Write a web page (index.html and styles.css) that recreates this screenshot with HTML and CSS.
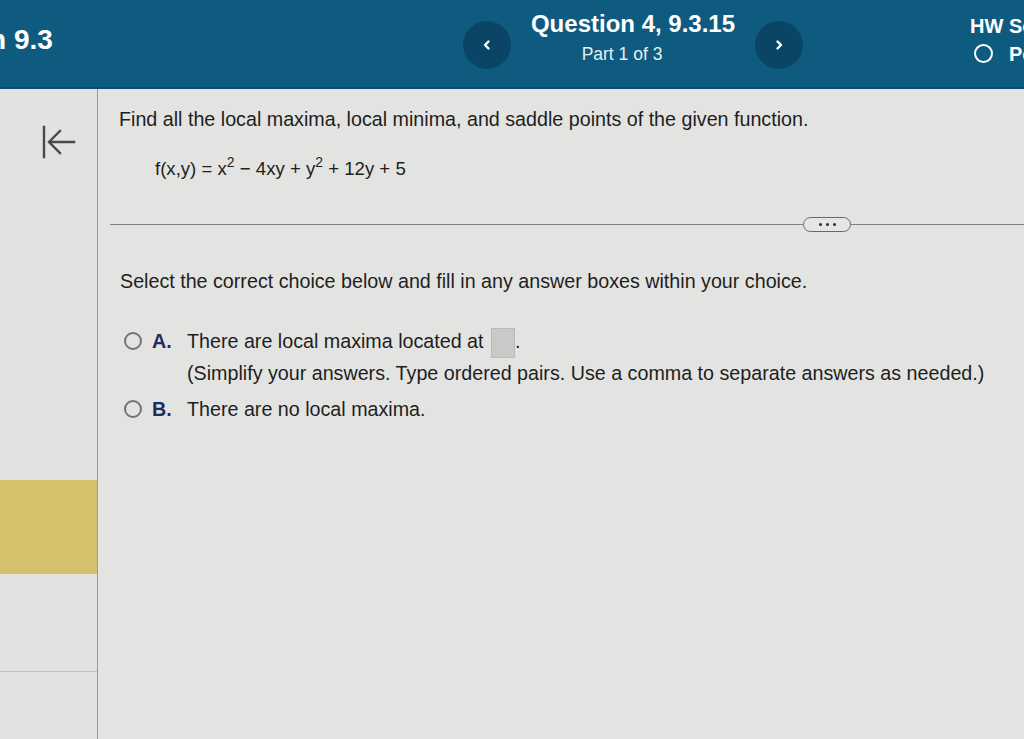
FILE: index.html
```html
<!DOCTYPE html>
<html lang="en">
<head>
<meta charset="utf-8">
<title>Question 4, 9.3.15</title>
<link rel="stylesheet" href="styles.css">
</head>
<body>
<header class="topbar">
  <div class="section-title">Section 9.3</div>
  <div class="qnav">
    <button class="navbtn" aria-label="Previous question">
      <svg width="12" height="12" viewBox="0 0 12 12"><path d="M7.5 2.5 L4 6 L7.5 9.5" fill="none" stroke="#fff" stroke-width="2.4" stroke-linecap="round" stroke-linejoin="round"/></svg>
    </button>
    <div class="qtitle">
      <div class="qname">Question 4, 9.3.15</div>
      <div class="qpart">Part 1 of 3</div>
    </div>
    <button class="navbtn" aria-label="Next question">
      <svg width="12" height="12" viewBox="0 0 12 12"><path d="M4.5 2.5 L8 6 L4.5 9.5" fill="none" stroke="#fff" stroke-width="2.4" stroke-linecap="round" stroke-linejoin="round"/></svg>
    </button>
  </div>
  <div class="score">
    <div class="score-line">HW Score: 45%</div>
    <div class="points-line"><span class="ring"></span>Points: 0 of 1</div>
  </div>
</header>
<div class="page">
  <aside class="sidebar">
    <div class="collapse">
      <svg width="36" height="34" viewBox="0 0 36 34"><path d="M3 2 V32 M33 17 H9 M19 6 L8 17 L19 28" fill="none" stroke="#4a4a4a" stroke-width="2.4" stroke-linecap="square"/></svg>
    </div>
    <div class="side-item active"></div>
    <div class="side-item"></div>
  </aside>
  <main class="content">
    <div class="question">
      <p class="prompt">Find all the local maxima, local minima, and saddle points of the given function.</p>
      <p class="formula">f(x,y) = x<sup>2</sup> − 4xy + y<sup>2</sup> + 12y + 5</p>
    </div>
    <div class="divider">
      <span class="rule"></span>
      <span class="more"><i></i><i></i><i></i></span>
      <span class="rule"></span>
    </div>
    <div class="answer">
      <p class="instr">Select the correct choice below and fill in any answer boxes within your choice.</p>
      <div class="choice">
        <span class="radio"></span>
        <span class="letter">A.</span>
        <div class="choice-text">
          <div>There are local maxima located at <span class="box"></span>.</div>
          <div class="hint">(Simplify your answers. Type ordered pairs. Use a comma to separate answers as needed.)</div>
        </div>
      </div>
      <div class="choice">
        <span class="radio"></span>
        <span class="letter">B.</span>
        <div class="choice-text">There are no local maxima.</div>
      </div>
    </div>
  </main>
</div>
</body>
</html>
```
FILE: styles.css
```css
html, body {
  margin: 0;
  padding: 0;
}
body {
  width: 1024px;
  height: 739px;
  overflow: hidden;
  background: #e3e4e2;
  font-family: "Liberation Sans", Arial, sans-serif;
  color: #1e1e1e;
}
.topbar {
  height: 89px;
  background: #0f5b80;
  display: grid;
  grid-template-columns: 463px auto 1fr;
  align-items: center;
  color: #fff;
  box-shadow: inset 0 -2px 0 #0b4d6c;
}
.section-title {
  font-weight: bold;
  font-size: 28px;
  margin-left: -95px;
  margin-top: -10px;
  white-space: nowrap;
}
.qnav {
  display: flex;
  align-items: center;
  gap: 18px;
}
.navbtn {
  width: 48px;
  height: 48px;
  border-radius: 50%;
  border: none;
  background: #0b4565;
  display: flex;
  align-items: center;
  justify-content: center;
  padding: 0;
}
.qtitle {
  width: 208px;
  text-align: center;
  margin-top: -14px;
}
.qname {
  font-weight: bold;
  font-size: 24px;
  line-height: 28px;
}
.qpart {
  font-size: 17.5px;
  line-height: 22px;
  margin-top: 5px;
  padding-right: 22px;
  color: #e6eef3;
}
.score {
  margin-left: 167px;
  white-space: nowrap;
  margin-top: -8px;
}
.score-line {
  font-weight: bold;
  font-size: 20px;
  line-height: 26px;
}
.points-line {
  font-weight: bold;
  font-size: 20px;
  line-height: 30px;
  display: flex;
  align-items: center;
  gap: 16px;
  padding-left: 4px;
}
.ring {
  width: 15px;
  height: 15px;
  border: 2.5px solid #fff;
  border-radius: 50%;
  display: inline-block;
}
.page {
  display: flex;
  height: 650px;
}
.sidebar {
  width: 97px;
  flex: none;
  border-right: 1.5px solid #9a9a9a;
  background: #e2e3e1;
  display: flex;
  flex-direction: column;
}
.collapse {
  height: 391px;
  padding: 36px 0 0 41px;
  box-sizing: border-box;
}
.side-item {
  height: 97px;
  border-bottom: 1px solid #bdbdbb;
}
.side-item.active {
  height: 94px;
  background: #d5c06c;
  border-bottom: none;
}
.content {
  flex: 1;
  padding: 17px 0 0 12px;
}
.question {
  padding-left: 9px;
}
.prompt {
  margin: 0;
  font-size: 19.7px;
  line-height: 26px;
}
.formula {
  margin: 25px 0 0 36px;
  font-size: 18.6px;
  line-height: 24px;
}
.formula sup {
  font-size: 14px;
  line-height: 0;
  vertical-align: 0.55em;
}
.divider {
  display: flex;
  align-items: center;
  margin-top: 36px;
}
.rule {
  height: 1px;
  background: #7e7f7e;
  flex: 1;
}
.rule:first-child {
  flex: none;
  width: 693px;
}
.more {
  width: 46px;
  height: 13px;
  border: 1.5px solid #6a6a6a;
  border-radius: 8px;
  display: flex;
  align-items: center;
  justify-content: center;
  gap: 4px;
  background: #e6e7e5;
}
.more i {
  width: 3px;
  height: 3px;
  border-radius: 50%;
  background: #2a2a3a;
}
.answer {
  padding-left: 10px;
}
.instr {
  margin: 36px 0 0 0;
  font-size: 19.7px;
  line-height: 26px;
}
.choice {
  display: flex;
  align-items: flex-start;
  font-size: 19.7px;
  line-height: 30px;
}
.choice:nth-of-type(1) {
  margin-top: 32px;
}
.choice + .choice {
  margin-top: 6px;
}
.radio {
  width: 14px;
  height: 14px;
  border: 2px solid #6e7380;
  border-radius: 50%;
  flex: none;
  margin: 6px 0 0 4px;
}
.letter {
  font-weight: bold;
  color: #1f2c5c;
  width: 35px;
  margin-left: 10px;
  flex: none;
}
.box {
  display: inline-block;
  width: 22px;
  height: 28px;
  background: #c9cac8;
  border: 1px solid #b9bab8;
  vertical-align: middle;
  margin-left: 2px;
}
.hint {
  line-height: 30px;
}
```
